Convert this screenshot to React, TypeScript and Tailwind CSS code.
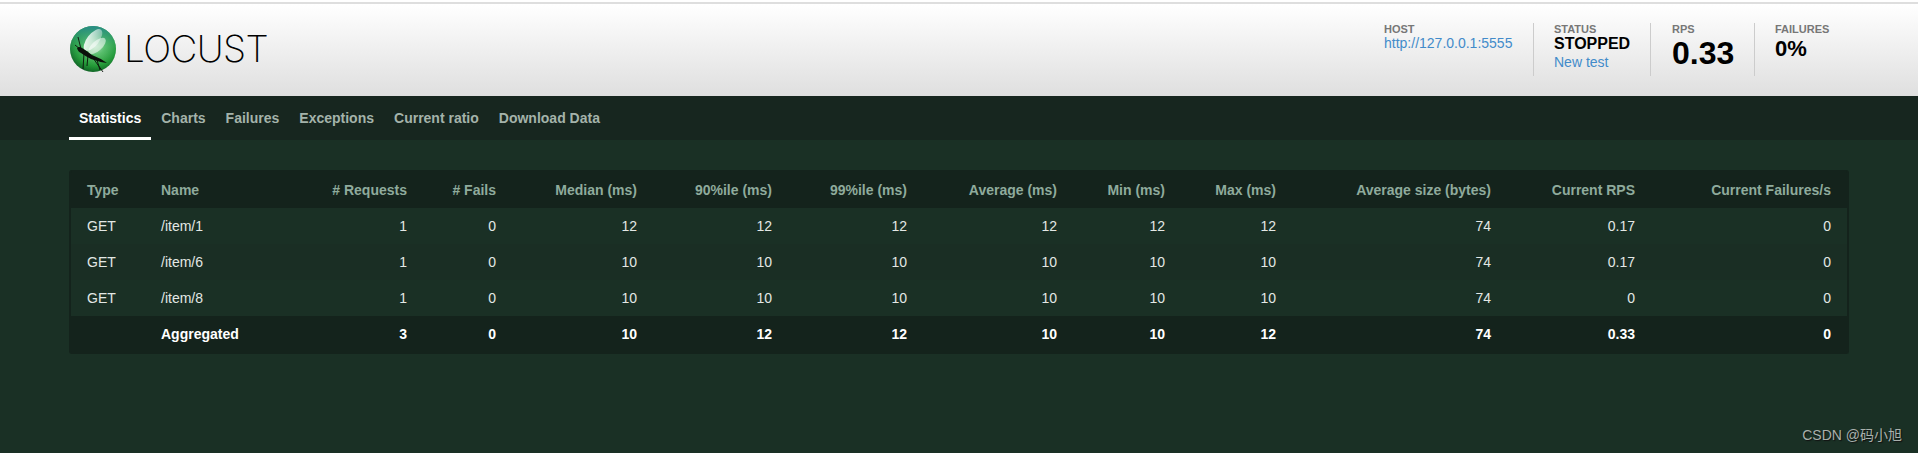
import React from "react";

const tabs = ["Statistics", "Charts", "Failures", "Exceptions", "Current ratio", "Download Data"];

const columns = [
  { label: "Type", width: "w-[74px]", left: true },
  { label: "Name", width: "w-[150px]", left: true },
  { label: "# Requests", width: "w-[128px]" },
  { label: "# Fails", width: "w-[89px]" },
  { label: "Median (ms)", width: "w-[141px]" },
  { label: "90%ile (ms)", width: "w-[135px]" },
  { label: "99%ile (ms)", width: "w-[135px]" },
  { label: "Average (ms)", width: "w-[150px]" },
  { label: "Min (ms)", width: "w-[108px]" },
  { label: "Max (ms)", width: "w-[111px]" },
  { label: "Average size (bytes)", width: "w-[215px]" },
  { label: "Current RPS", width: "w-[144px]" },
  { label: "Current Failures/s", width: "w-[196px]" },
];

const rows = [
  ["GET", "/item/1", "1", "0", "12", "12", "12", "12", "12", "12", "74", "0.17", "0"],
  ["GET", "/item/6", "1", "0", "10", "10", "10", "10", "10", "10", "74", "0.17", "0"],
  ["GET", "/item/8", "1", "0", "10", "10", "10", "10", "10", "10", "74", "0", "0"],
];

const total = ["", "Aggregated", "3", "0", "10", "12", "12", "10", "10", "12", "74", "0.33", "0"];

const Logo = () => (
  <svg width="46" height="46" viewBox="0 0 46 46" className="shrink-0">
    <defs>
      <radialGradient id="ball" cx="55%" cy="42%" r="60%">
        <stop offset="0%" stopColor="#e2f8e0" />
        <stop offset="35%" stopColor="#66c872" />
        <stop offset="75%" stopColor="#239a36" />
        <stop offset="100%" stopColor="#0f5f25" />
      </radialGradient>
      <linearGradient id="rim" x1="0" y1="0" x2="0" y2="1">
        <stop offset="0%" stopColor="#2a8c8a" />
        <stop offset="45%" stopColor="#38a868" stopOpacity="0.35" />
        <stop offset="100%" stopColor="#1d8a2e" stopOpacity="0" />
      </linearGradient>
      <linearGradient id="wing" x1="0" y1="1" x2="1" y2="0">
        <stop offset="0%" stopColor="#ffffff" />
        <stop offset="100%" stopColor="#ffffff" stopOpacity="0.25" />
      </linearGradient>
    </defs>
    <circle cx="23" cy="23" r="23" fill="url(#ball)" />
    <circle cx="23" cy="23" r="23" fill="url(#rim)" />
    <ellipse cx="23" cy="14" rx="6" ry="13" transform="rotate(38 23 14)" fill="url(#wing)" />
    <ellipse cx="27" cy="20" rx="5" ry="11" transform="rotate(48 27 20)" fill="#fff" opacity="0.55" />
    <path d="M7 22 Q9 20 12 22 Q17 25 22 29 Q30 32 37 37 Q29 36 21 33 Q15 30 11 27 Q8 26 7 22Z" fill="#0a110a" />
    <path
      d="M8 11 L11 23 M14 27 L13 43 M18 29 L17 40 M23 32 L33 46 M27 34 L30 44 M5 19 L10 23"
      stroke="#0a110a"
      strokeWidth="0.9"
      fill="none"
    />
  </svg>
);

const Label = ({ children }: { children: React.ReactNode }) => (
  <div className="text-[11px] font-bold leading-[12px] text-[#777]">{children}</div>
);

export default function App() {
  return (
    <div className="relative h-[453px] overflow-hidden bg-[#1a3025] font-['Liberation_Sans',Arial,sans-serif]">
      <div className="h-[2px] bg-white" />
      <header className="flex h-[94px] justify-between border-t-2 border-[#dedede] bg-gradient-to-b from-white to-[#dfdfdf] pl-[70px]">
        <div className="flex items-center gap-[8px] pb-[3px]">
          <Logo />
          <span className="-mt-[1px] font-['Inter',sans-serif] text-[37px] font-extralight leading-none tracking-[-0.6px] text-black">
            LOCUST
          </span>
        </div>
        <div className="flex pt-[19px]">
          <div className="h-[53px] w-[149px]">
            <Label>HOST</Label>
            <a className="block text-[14px] leading-[17px] text-[#428bca]">http://127.0.0.1:5555</a>
          </div>
          <div className="h-[53px] w-[117px] border-l border-[#ccc] pl-[20px]">
            <Label>STATUS</Label>
            <div className="text-[16px] font-bold leading-[17px] text-black">STOPPED</div>
            <a className="block text-[14px] leading-[20px] text-[#428bca]">New test</a>
          </div>
          <div className="h-[53px] w-[104px] border-l border-[#ccc] pl-[21px]">
            <Label>RPS</Label>
            <div className="text-[32px] font-bold leading-[36px] text-black">0.33</div>
          </div>
          <div className="h-[53px] w-[164px] border-l border-[#ccc] pl-[20px]">
            <Label>FAILURES</Label>
            <div className="text-[22px] font-bold leading-[27px] text-black">0%</div>
          </div>
        </div>
      </header>

      <nav className="flex h-[44px] bg-[#17261f] pl-[69px]">
        {tabs.map((tab, i) => (
          <a
            key={tab}
            className={`flex items-center px-[10px] text-[14px] font-bold ${
              i === 0 ? "border-b-[3px] border-white pt-[3px] text-white" : "text-[#a4b3aa]"
            }`}
          >
            {tab}
          </a>
        ))}
      </nav>

      <main className="px-[69px] pt-[30px]">
        <div className="w-[1780px] rounded-[3px] border-2 border-t-0 border-[#14231c] bg-[#14231c]">
          <table className="w-[1776px] table-fixed border-collapse text-[14px]">
            <thead>
              <tr className="h-[38px]">
                {columns.map((col) => (
                  <th
                    key={col.label}
                    className={`${col.width} px-4 pt-[2px] font-bold text-[#8fab9c] ${col.left ? "text-left" : "text-right"}`}
                  >
                    {col.label}
                  </th>
                ))}
              </tr>
            </thead>
            <tbody>
              {rows.map((row, i) => (
                <tr key={i} className={`h-[36px] text-[#e3e8e5] ${i === 1 ? "bg-[#1a2e24]" : "bg-[#1a3025]"}`}>
                  {row.map((cell, j) => (
                    <td key={j} className={`px-4 ${j < 2 ? "text-left" : "text-right"}`}>
                      {cell}
                    </td>
                  ))}
                </tr>
              ))}
              <tr className="h-[36px] font-bold text-white">
                {total.map((cell, j) => (
                  <td key={j} className={`px-4 ${j < 2 ? "text-left" : "text-right"}`}>
                    {cell}
                  </td>
                ))}
              </tr>
            </tbody>
          </table>
        </div>
      </main>

      <div className="absolute bottom-[7px] right-[16px] font-['Liberation_Sans','Noto_Sans_CJK_SC',sans-serif] text-[14px] text-[#a9b0ac] [text-shadow:1px_1px_1px_#111]">
        CSDN @码小旭
      </div>
    </div>
  );
}
